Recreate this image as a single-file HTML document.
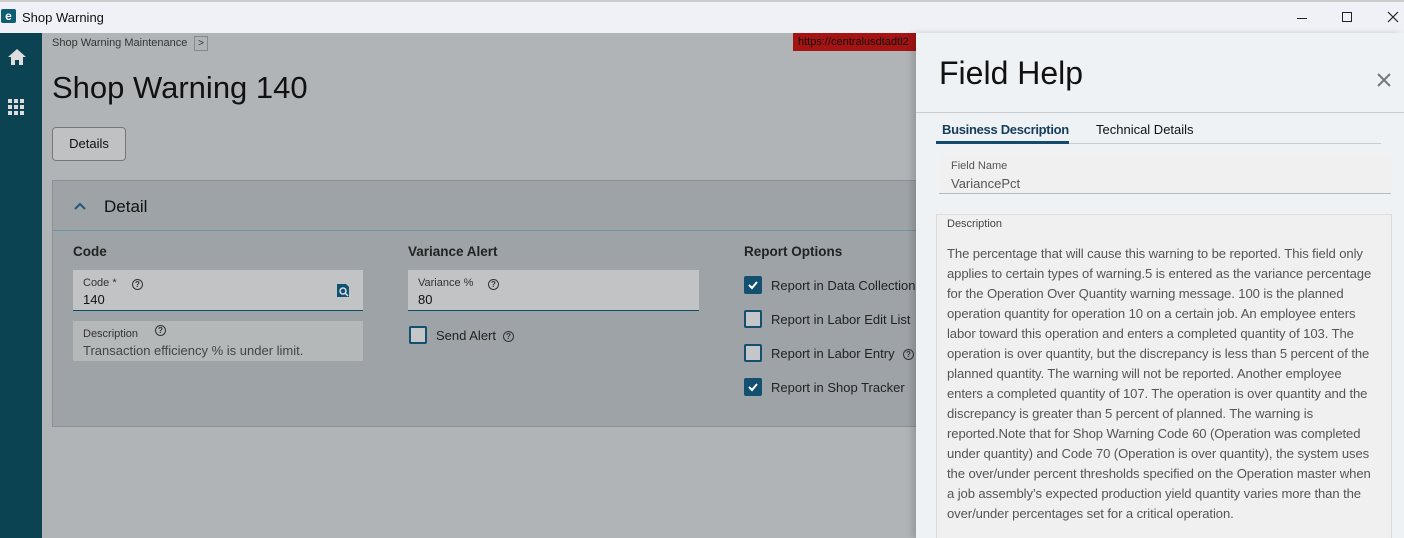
<!DOCTYPE html>
<html><head><meta charset="utf-8"><style>
*{box-sizing:border-box;margin:0;padding:0}
html,body{width:1404px;height:538px;overflow:hidden}
body{position:relative;font-family:"Liberation Sans",sans-serif;background:#b1b4b6;color:#111}
.abs{position:absolute}
.title{left:0;top:0;width:1404px;height:33px;background:#eff1f7;border-top:2px solid #ccc}
.side{left:0;top:33px;width:42px;height:505px;background:#0b4352}
.help{display:inline-block;width:11px;height:11px;border:1.3px solid #333;border-radius:50%;font-size:8px;line-height:9px;text-align:center;font-weight:bold;color:#333;vertical-align:middle}
.fld{background:#c1c3c4;border-bottom:1.5px solid #0e4c66}
.lbl{font-size:11px;color:#333}
.cb{width:18px;height:18px;border:2px solid #134f6e;border-radius:2px;background:#c4c6c7}
.cb.on{background:#134f6e}
.opt{font-size:13px;color:#222}
.desc{font-size:13.1px;line-height:20px;color:#555;white-space:nowrap;letter-spacing:-0.1px}
</style></head><body>
<div class="abs title">
 <div class="abs" style="left:1px;top:7px;width:15px;height:14px;background:#0e5d73;border-radius:2px;color:#fff;font-size:12px;font-weight:bold;line-height:14px;text-align:center">e</div>
 <div class="abs" style="left:22px;top:8px;font-size:13px;color:#111">Shop Warning</div>
 <div class="abs" style="left:1297px;top:16px;width:10px;height:1px;background:#222"></div>
 <div class="abs" style="left:1342px;top:10px;width:10px;height:10px;border:1px solid #222"></div>
 <svg class="abs" style="left:1387px;top:9px" width="12" height="12"><path d="M1 1l10 10M11 1L1 11" stroke="#222" stroke-width="1.2"/></svg>
</div>
<div class="abs side">
 <svg class="abs" style="left:7px;top:15px" width="20" height="18" viewBox="0 0 20 18"><path d="M10 1L1 9h3v8h4v-5h4v5h4V9h3z" fill="#ddd"/></svg>
 <svg class="abs" style="left:8px;top:66px" width="17" height="17"><g fill="#ddd"><rect x="0" y="0" width="4" height="4"/><rect x="6" y="0" width="4" height="4"/><rect x="12" y="0" width="4" height="4"/><rect x="0" y="6" width="4" height="4"/><rect x="6" y="6" width="4" height="4"/><rect x="12" y="6" width="4" height="4"/><rect x="0" y="12" width="4" height="4"/><rect x="6" y="12" width="4" height="4"/><rect x="12" y="12" width="4" height="4"/></g></svg>
</div>
<div class="abs" style="left:52px;top:37px;font-size:11px;color:#333">Shop Warning Maintenance</div>
<div class="abs" style="left:194px;top:36px;width:14px;height:15px;border:1px solid #888;font-size:10px;text-align:center;line-height:13px;color:#333">&gt;</div>
<div class="abs" style="left:793px;top:33px;width:130px;height:18px;background:#a51313;font-size:11px;line-height:18px;padding-left:5px;color:#111;overflow:hidden;white-space:nowrap">https://centralusdtadtl2</div>
<div class="abs" style="left:52px;top:70px;font-size:31px;color:#111">Shop Warning 140</div>
<div class="abs" style="left:52px;top:127px;width:74px;height:34px;border:1px solid #777;border-radius:4px;background:#bfc1c2;font-size:13px;text-align:center;line-height:32px">Details</div>
<div class="abs" style="left:52px;top:180px;width:870px;height:247px;background:#9da3a6;border:1px solid #8c9294">
 <div class="abs" style="left:0;top:49px;width:870px;height:1px;background:#6d97a6"></div>
 <svg class="abs" style="left:20px;top:20px" width="14" height="10"><path d="M2 8L7 3l5 5" stroke="#1b5a78" stroke-width="2" fill="none"/></svg>
 <div class="abs" style="left:51px;top:16px;font-size:17px">Detail</div>
 <div class="abs" style="left:20px;top:63px;font-size:13.5px;font-weight:bold;color:#222">Code</div>
 <div class="abs fld" style="left:20px;top:89px;width:290px;height:41px"><div class="abs lbl" style="left:10px;top:7px">Code *</div><span class="help abs" style="left:59px;top:9px">?</span><div class="abs" style="left:10px;top:22px;font-size:13px">140</div>
  <svg class="abs" style="left:263px;top:13px" width="14" height="15"><path d="M1 1h9l3 3v10H1z" fill="#0e5173"/><circle cx="7" cy="8" r="3" stroke="#ddd" stroke-width="1.5" fill="none"/><path d="M9 10l3 3" stroke="#ddd" stroke-width="1.5"/></svg></div>
 <div class="abs" style="left:20px;top:140px;width:290px;height:40px;background:#b5b8b9"><div class="abs lbl" style="left:10px;top:7px">Description</div><span class="help abs" style="left:82px;top:4px">?</span><div class="abs" style="left:10px;top:22px;font-size:13px;color:#444">Transaction efficiency % is under limit.</div></div>
 <div class="abs" style="left:355px;top:63px;font-size:13.5px;font-weight:bold;color:#222">Variance Alert</div>
 <div class="abs fld" style="left:355px;top:89px;width:291px;height:41px"><div class="abs lbl" style="left:10px;top:7px">Variance %</div><span class="help abs" style="left:80px;top:9px">?</span><div class="abs" style="left:10px;top:22px;font-size:13px">80</div></div>
 <div class="abs cb" style="left:356px;top:145px"></div><div class="abs opt" style="left:383px;top:147px">Send Alert</div><span class="help abs" style="left:450px;top:150px">?</span>
 <div class="abs" style="left:691px;top:63px;font-size:13.5px;font-weight:bold;color:#222">Report Options</div>
 <div class="abs cb on" style="left:691px;top:95px"><svg width="14" height="14"><path d="M3 7l3 3 5-6" stroke="#fff" stroke-width="2" fill="none"/></svg></div><div class="abs opt" style="left:718px;top:97px">Report in Data Collection</div>
 <div class="abs cb" style="left:691px;top:129px"></div><div class="abs opt" style="left:718px;top:131px">Report in Labor Edit List</div>
 <div class="abs cb" style="left:691px;top:163px"></div><div class="abs opt" style="left:718px;top:165px">Report in Labor Entry</div><span class="help abs" style="left:850px;top:168px">?</span>
 <div class="abs cb on" style="left:691px;top:197px"><svg width="14" height="14"><path d="M3 7l3 3 5-6" stroke="#fff" stroke-width="2" fill="none"/></svg></div><div class="abs opt" style="left:718px;top:199px">Report in Shop Tracker</div>
</div>
<div class="abs" style="left:916px;top:33px;width:488px;height:505px;background:#eff2f5;box-shadow:-4px 0 6px rgba(0,0,0,0.15);overflow:hidden">
 <div class="abs" style="left:23px;top:22px;font-size:32px;color:#111">Field Help</div>
 <svg class="abs" style="left:461px;top:40px" width="14" height="14"><path d="M1 1l12 12M13 1L1 13" stroke="#777" stroke-width="2"/></svg>
 <div class="abs" style="left:0;top:79px;width:488px;height:1px;background:#ccc"></div>
 <div class="abs" style="left:20px;top:110px;width:445px;height:1px;background:#ccc"></div>
 <div class="abs" style="left:26px;top:89px;font-size:13px;color:#163d59;font-weight:bold;letter-spacing:-0.3px">Business Description</div>
 <div class="abs" style="left:20px;top:108px;width:133px;height:3px;background:#124b6b"></div>
 <div class="abs" style="left:180px;top:89px;font-size:13px;color:#111">Technical Details</div>
 <div class="abs" style="left:23px;top:121px;width:452px;height:40px;background:#f0f0f0;border-bottom:1px solid #bbb"><div class="abs lbl" style="left:12px;top:6px;color:#555">Field Name</div><div class="abs" style="left:12px;top:22px;font-size:13px;color:#555">VariancePct</div></div>
 <div class="abs" style="left:20px;top:181px;width:456px;height:330px;background:#f0f0f0;border:1px solid #ddd">
  <div class="abs lbl" style="left:10px;top:3px;color:#444">Description</div>
  <div class="abs desc" style="left:10px;top:29px">The percentage that will cause this warning to be reported. This field only<br>applies to certain types of warning.5 is entered as the variance percentage<br>for the Operation Over Quantity warning message. 100 is the planned<br>operation quantity for operation 10 on a certain job. An employee enters<br>labor toward this operation and enters a completed quantity of 103. The<br>operation is over quantity, but the discrepancy is less than 5 percent of the<br>planned quantity. The warning will not be reported. Another employee<br>enters a completed quantity of 107. The operation is over quantity and the<br>discrepancy is greater than 5 percent of planned. The warning is<br>reported.Note that for Shop Warning Code 60 (Operation was completed<br>under quantity) and Code 70 (Operation is over quantity), the system uses<br>the over/under percent thresholds specified on the Operation master when<br>a job assembly’s expected production yield quantity varies more than the<br>over/under percentages set for a critical operation.</div>
 </div>
</div>
</body></html>
